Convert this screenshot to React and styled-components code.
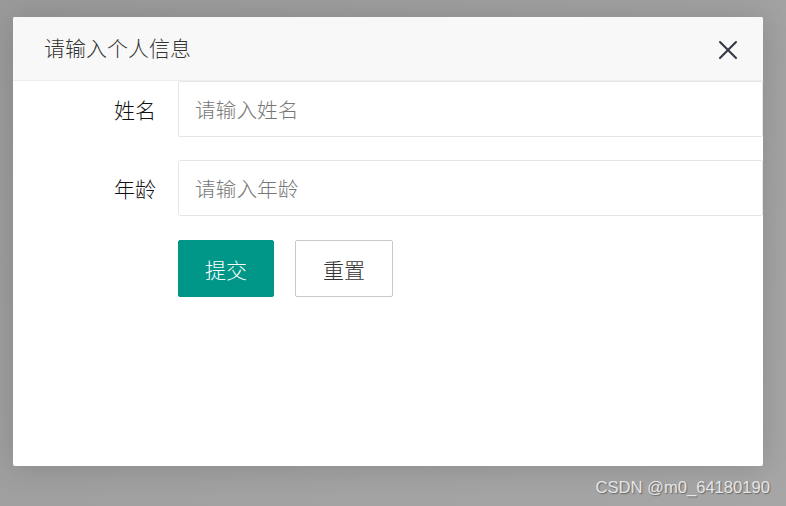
import React from "react";
import styled, { createGlobalStyle } from "styled-components";

const Global = createGlobalStyle`
  html, body { margin: 0; padding: 0; }
  body {
    width: 786px;
    height: 506px;
    overflow: hidden;
    background: #a0a0a0;
    font-family: "Noto Sans CJK SC", "Noto Sans", sans-serif;
  }
`;

const Page = styled.div`
  position: relative;
  width: 786px;
  height: 506px;
  padding: 17px 0 0 13px;
  box-sizing: border-box;
  background: linear-gradient(135deg, #9a9a9a 0%, #a2a2a2 60%, #a6a6a6 100%);
`;

const Dialog = styled.div`
  width: 750px;
  height: 449px;
  background: #fff;
  border-radius: 2px;
  box-shadow: 1px 1px 30px rgba(0, 0, 0, 0.15);
  overflow: hidden;
  display: flex;
  flex-direction: column;
`;

const Header = styled.div`
  height: 64px;
  flex: none;
  box-sizing: border-box;
  background: #f8f8f8;
  border-bottom: 1px solid #eee;
  display: flex;
  align-items: center;
  justify-content: space-between;
  padding: 0 24px 0 31px;
`;

const Title = styled.div`
  font-size: 21px;
  font-weight: 300;
  color: #333;
  line-height: 1;
  margin-top: -2px;
`;

const Close = styled.button`
  border: 0;
  background: none;
  padding: 0;
  width: 22px;
  height: 22px;
  display: flex;
  align-items: center;
  justify-content: center;
  cursor: pointer;
  margin-top: 2px;
`;

const Form = styled.form`
  display: flex;
  flex-direction: column;
  gap: 23px;
`;

const Row = styled.div`
  display: flex;
  align-items: center;
  height: 56px;
`;

const Label = styled.label`
  width: 143px;
  padding-right: 22px;
  text-align: right;
  font-size: 21px;
  font-weight: 300;
  color: #111;
  flex: none;
`;

const Input = styled.input`
  width: 585px;
  height: 56px;
  box-sizing: border-box;
  border: 1px solid #e6e6e6;
  border-radius: 2px;
  padding: 0 16px;
  font-size: 20.7px;
  font-weight: 300;
  font-family: inherit;
  color: #333;
  outline: none;
  &::placeholder { color: #777; }
`;

const Buttons = styled.div`
  display: flex;
  gap: 21px;
  padding-left: 165px;
  margin-top: 1px;
`;

const Btn = styled.button`
  height: 57px;
  width: ${p => p.$w}px;
  box-sizing: border-box;
  border-radius: 2px;
  font-size: 21px;
  font-weight: 300;
  font-family: inherit;
  cursor: pointer;
  background: ${p => (p.$primary ? "#009688" : "#fff")};
  color: ${p => (p.$primary ? "#fff" : "#333")};
  border: 1px solid ${p => (p.$primary ? "#009688" : "#c9c9c9")};
`;

const Watermark = styled.div`
  position: absolute;
  right: 16px;
  bottom: 8px;
  font-family: "Liberation Sans", Arial, sans-serif;
  font-size: 16.6px;
  color: #e6e6e6;
  text-shadow: 1px 1px 1px rgba(80, 80, 80, 0.7);
`;

export default function App() {
  return (
    <>
      <Global />
      <Page>
        <Dialog>
          <Header>
            <Title>请输入个人信息</Title>
            <Close aria-label="close">
              <svg width="20" height="20" viewBox="0 0 20 20">
                <path d="M2 2 L18 18 M18 2 L2 18" stroke="#333844" strokeWidth="2.1" strokeLinecap="round" />
              </svg>
            </Close>
          </Header>
          <Form onSubmit={e => e.preventDefault()}>
            <Row>
              <Label>姓名</Label>
              <Input placeholder="请输入姓名" />
            </Row>
            <Row>
              <Label>年龄</Label>
              <Input placeholder="请输入年龄" />
            </Row>
            <Buttons>
              <Btn $primary $w={96}>提交</Btn>
              <Btn type="reset" $w={98}>重置</Btn>
            </Buttons>
          </Form>
        </Dialog>
        <Watermark>CSDN @m0_64180190</Watermark>
      </Page>
    </>
  );
}
